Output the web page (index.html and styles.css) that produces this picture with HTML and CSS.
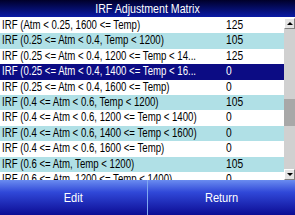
FILE: index.html
```html
<!DOCTYPE html>
<html lang="en">
<head>
    <meta charset="UTF-8">
    <title>IRF Adjustment Matrix</title>
    <link rel="stylesheet" href="styles.css">
</head>
<body>
    <div class="screen">
        <div class="title"><span>IRF Adjustment Matrix</span></div>

        <div class="main">
            <div class="list">
                <div class="row"><div class="name"><span>IRF (Atm &lt; 0.25, 1600 &lt;= Temp)</span></div><div class="val"><span>125</span></div></div>
                <div class="row"><div class="name"><span>IRF (0.25 &lt;= Atm &lt; 0.4, Temp &lt; 1200)</span></div><div class="val"><span>105</span></div></div>
                <div class="row"><div class="name"><span>IRF (0.25 &lt;= Atm &lt; 0.4, 1200 &lt;= Temp &lt; 14...</span></div><div class="val"><span>125</span></div></div>
                <div class="row sel"><div class="name"><span>IRF (0.25 &lt;= Atm &lt; 0.4, 1400 &lt;= Temp &lt; 16...</span></div><div class="val"><span>0</span></div></div>
                <div class="row"><div class="name"><span>IRF (0.25 &lt;= Atm &lt; 0.4, 1600 &lt;= Temp)</span></div><div class="val"><span>0</span></div></div>
                <div class="row"><div class="name"><span>IRF (0.4 &lt;= Atm &lt; 0.6, Temp &lt; 1200)</span></div><div class="val"><span>105</span></div></div>
                <div class="row"><div class="name"><span>IRF (0.4 &lt;= Atm &lt; 0.6, 1200 &lt;= Temp &lt; 1400)</span></div><div class="val"><span>0</span></div></div>
                <div class="row"><div class="name"><span>IRF (0.4 &lt;= Atm &lt; 0.6, 1400 &lt;= Temp &lt; 1600)</span></div><div class="val"><span>0</span></div></div>
                <div class="row"><div class="name"><span>IRF (0.4 &lt;= Atm &lt; 0.6, 1600 &lt;= Temp)</span></div><div class="val"><span>0</span></div></div>
                <div class="row"><div class="name"><span>IRF (0.6 &lt;= Atm, Temp &lt; 1200)</span></div><div class="val"><span>105</span></div></div>
                <div class="row"><div class="name"><span>IRF (0.6 &lt;= Atm, 1200 &lt;= Temp &lt; 1400)</span></div><div class="val"><span>0</span></div></div>
            </div>

            <div class="scroll">
                <div class="arrow up"><i></i></div>
                <div class="track"><div class="thumb"></div></div>
                <div class="arrow down"><i></i></div>
            </div>
        </div>

        <div class="buttons">
            <div class="btn"><span>Edit</span></div>
            <div class="btn"><span>Return</span></div>
        </div>
    </div>
</body>
</html>
```

FILE: styles.css
```css
body {
    margin: 0;
    width: 295px;
    height: 215px;
    overflow: hidden;
    font-family: "Liberation Sans", Arial, sans-serif;
    background-color: #fff;
}
.screen {
    display: flex;
    flex-direction: column;
    height: 215px;
}
/* the device font is a narrow one, so texts are squeezed sideways */
.title span,
.name span,
.val span,
.btn span {
    display: inline-block;
    white-space: nowrap;
}
.title {
    height: 17px;
    line-height: 19px;
    font-size: 12.5px;
    color: #fff;
    text-align: center;
    background: linear-gradient(#00002a, #0a1aa6);
    border-bottom: 1px solid #fff;
}
.title span {
    transform: scaleX(0.85);
}
.main {
    display: flex;
    height: 162px;
}
.list {
    flex: 1;
    overflow: hidden;
}
.row {
    display: flex;
    height: 15.4px;
    line-height: 15.4px;
    font-size: 12.5px;
    color: #000;
}
.row:nth-child(even) {
    background-color: #b0e0e6;
}
.row.sel {
    background-color: #0c0c84;
    color: #fff;
}
.name {
    width: 225px;
    padding-left: 2px;
    box-sizing: border-box;
    overflow: hidden;
}
.name span {
    transform: scaleX(0.77);
    transform-origin: left center;
}
.val {
    flex: 1;
    padding-left: 1px;
    overflow: hidden;
}
.val span {
    transform: scaleX(0.82);
    transform-origin: left center;
}
.scroll {
    width: 11px;
    display: flex;
    flex-direction: column;
    background-color: #d0d0d0;
}
.arrow {
    height: 11px;
    box-sizing: border-box;
    background-color: #e4e4e4;
    border: 1px solid;
    border-color: #fff #808080 #808080 #fff;
    display: flex;
    align-items: center;
    justify-content: center;
}
.arrow i {
    width: 0;
    height: 0;
    border-left: 3px solid transparent;
    border-right: 3px solid transparent;
}
.arrow.up i {
    border-bottom: 3px solid #000;
}
.arrow.down i {
    border-top: 3px solid #000;
}
.track {
    flex: 1;
}
.thumb {
    margin-top: 70px;
    height: 27px;
    background-color: #a8a8a8;
}
.buttons {
    display: flex;
    height: 35px;
}
.btn {
    flex: 1;
    display: flex;
    align-items: center;
    justify-content: center;
    font-size: 13px;
    color: #fff;
    background: linear-gradient(#6a8cf0 0%, #3048d8 35%, #0c0c94 100%);
}
.btn span {
    transform: scaleX(0.85);
}
.btn + .btn {
    border-left: 1px solid #80a8f0;
}
```
